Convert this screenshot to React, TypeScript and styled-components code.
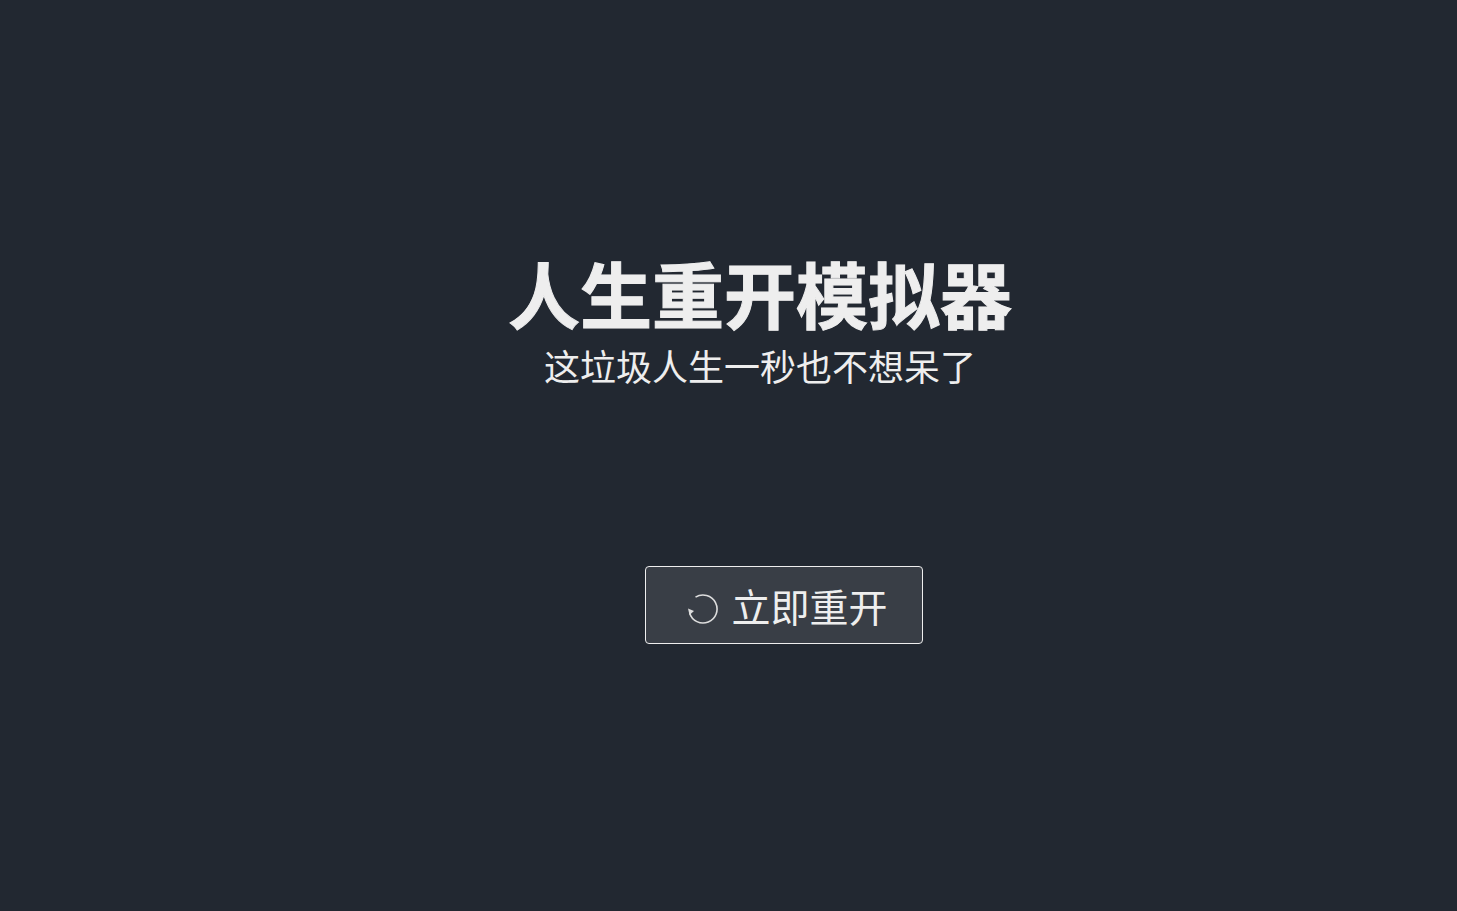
import * as React from "react";
import styled, { createGlobalStyle } from "styled-components";

const GlobalStyles = createGlobalStyle`
  html, body {
    margin: 0;
    padding: 0;
    height: 100%;
    background: #222831;
  }
`;

const Page = styled.div`
  height: 911px;
  overflow: hidden;
  background: #222831;
  color: #eeeeee;
  font-family: "Liberation Sans", "Noto Sans CJK SC", sans-serif;
  text-align: center;
  display: flex;
  flex-direction: column;
  align-items: center;
  padding-top: 256px;
  box-sizing: border-box;
`;

const Banner = styled.div`
  margin-left: 63px;
`;

const Title = styled.h1`
  margin: 0;
  font-size: 72px;
  line-height: 84px;
  font-weight: 700;
  -webkit-text-stroke: 1px #eeeeee;
`;

const Subtitle = styled.h2`
  margin: 8px 0 0;
  font-size: 36px;
  line-height: 42px;
  font-weight: 400;
`;

const RestartButton = styled.button`
  display: flex;
  align-items: center;
  justify-content: center;
  gap: 12px;
  box-sizing: border-box;
  width: 278px;
  height: 78px;
  margin: 176px 0 0 110px;
  padding: 0 0 0 8px;
  border: 1px solid #eeeeee;
  border-radius: 4px;
  background: #393e46;
  color: #eeeeee;
  font: inherit;
  font-size: 39px;

  svg {
    margin-top: 8px;
  }
`;

const RestartIcon = () => (
  <svg width="32" height="32" viewBox="0 0 32 32" fill="none" stroke="#dddddd" strokeWidth="1.6">
    <path d="M8.5 4.2A14 14 0 1 1 2.6 20" />
    <path d="M1 15.5l6 2.5-4.5 4z" fill="#dddddd" stroke="none" />
  </svg>
);

export default function App() {
  return (
    <Page>
      <GlobalStyles />
      <Banner>
        <Title>人生重开模拟器</Title>
        <Subtitle>这垃圾人生一秒也不想呆了</Subtitle>
      </Banner>
      <RestartButton>
        <RestartIcon />
        立即重开
      </RestartButton>
    </Page>
  );
}
